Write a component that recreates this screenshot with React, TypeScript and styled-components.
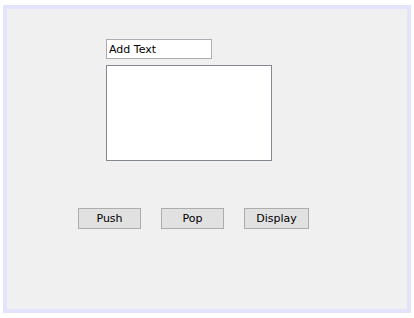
import React from "react";
import { styled, createGlobalStyle } from "styled-components";

const GlobalStyle = createGlobalStyle`
  body {
    margin: 0;
    background: #ffffff;
    font-family: "DejaVu Sans", "Liberation Sans", sans-serif;
  }
`;

const Frame = styled.div`
  box-sizing: border-box;
  width: 408px;
  height: 308px;
  margin: 5px 0 0 3px;
  border: 4px solid #e3e3fb;
  background: #f0f0f0;
  padding-top: 30px;
`;

const Column = styled.div`
  display: flex;
  flex-direction: column;
  gap: 6px;
  padding-left: 99px;
`;

const TextField = styled.input`
  box-sizing: border-box;
  width: 106px;
  height: 20px;
  margin: 0;
  padding: 0 2px;
  border: 1px solid #abadb3;
  background: #ffffff;
  font-family: "DejaVu Sans", sans-serif;
  font-size: 11px;
  color: #000000;
  outline: none;
`;

const TextArea = styled.textarea`
  box-sizing: border-box;
  width: 166px;
  height: 96px;
  margin: 0;
  border: 1px solid #828790;
  background: #ffffff;
  resize: none;
  outline: none;
`;

const ButtonRow = styled.div`
  display: flex;
  gap: 20px;
  padding-left: 71px;
  margin-top: 47px;
`;

const Button = styled.button<{ $width: number }>`
  box-sizing: border-box;
  width: ${(p) => p.$width}px;
  height: 21px;
  margin: 0;
  padding: 0;
  border: 1px solid #adadad;
  background: #e1e1e1;
  font-family: "DejaVu Sans", sans-serif;
  font-size: 11px;
  color: #000000;
`;

export default function App() {
  return (
    <>
      <GlobalStyle />
      <Frame>
        <Column>
          <TextField defaultValue="Add Text" />
          <TextArea />
        </Column>
        <ButtonRow>
          <Button $width={63}>Push</Button>
          <Button $width={63}>Pop</Button>
          <Button $width={65}>Display</Button>
        </ButtonRow>
      </Frame>
    </>
  );
}
